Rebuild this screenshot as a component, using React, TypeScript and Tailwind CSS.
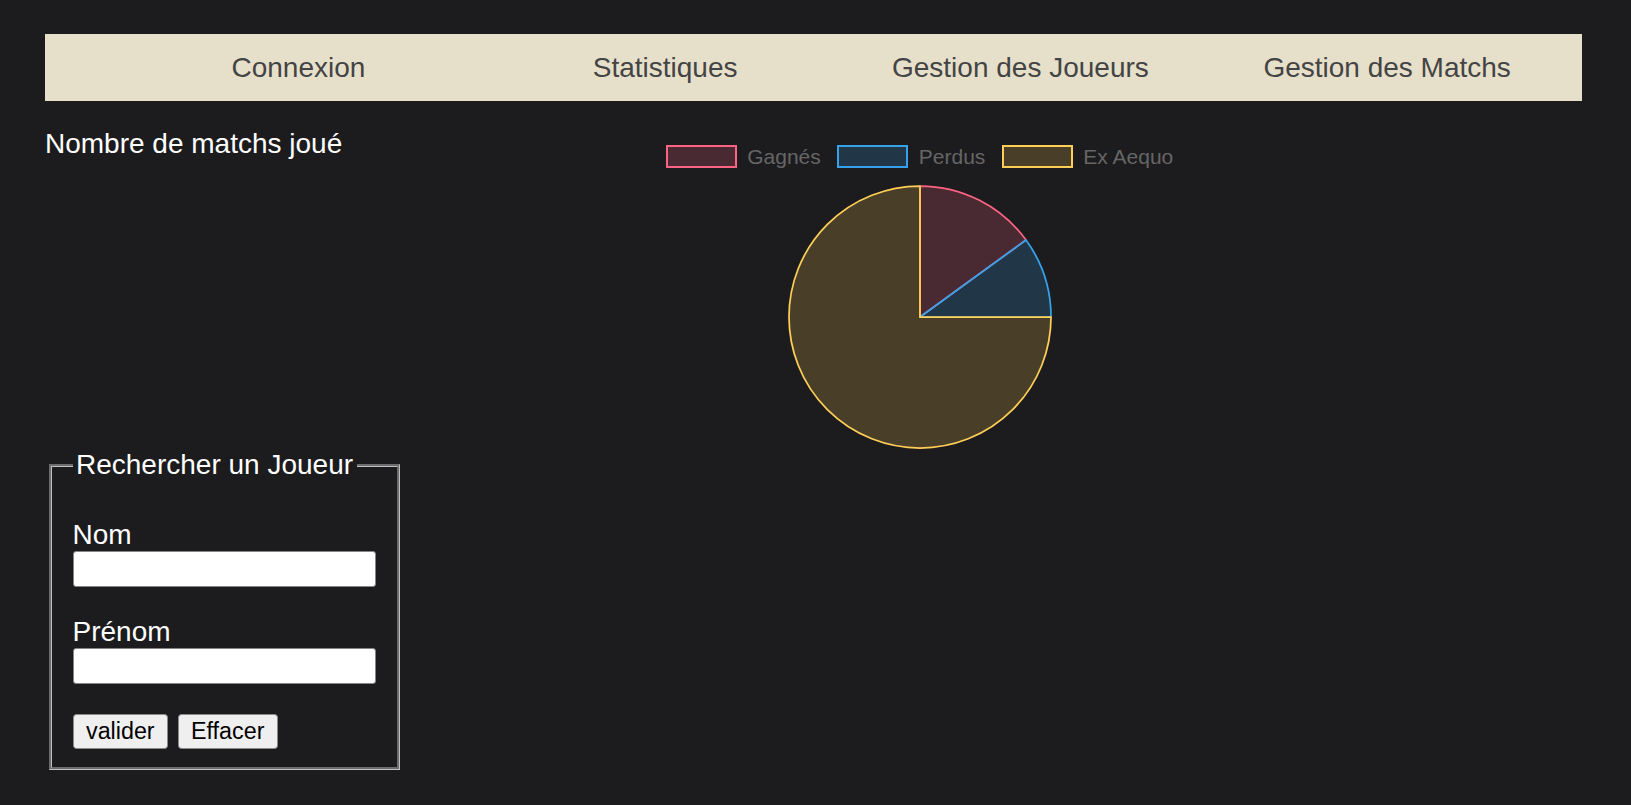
import React from "react";

const legendItems = [
  { label: "Gagnés", fill: "bg-[rgba(255,99,132,0.2)]", border: "border-[rgb(255,99,132)]" },
  { label: "Perdus", fill: "bg-[rgba(54,162,235,0.2)]", border: "border-[rgb(54,162,235)]" },
  { label: "Ex Aequo", fill: "bg-[rgba(255,206,86,0.2)]", border: "border-[rgb(255,206,86)]" },
];

function Pie() {
  return (
    <svg width="266" height="266" viewBox="0 0 266 266" className="block">
      <path
        d="M133 133 L133 2 A131 131 0 0 1 238.98 56 Z"
        fill="rgba(255,99,132,0.2)"
        stroke="rgb(255,99,132)"
        strokeWidth="1.75"
        strokeLinejoin="round"
      />
      <path
        d="M133 133 L238.98 56 A131 131 0 0 1 264 133 Z"
        fill="rgba(54,162,235,0.2)"
        stroke="rgb(54,162,235)"
        strokeWidth="1.75"
        strokeLinejoin="round"
      />
      <path
        d="M133 133 L264 133 A131 131 0 1 1 133 2 Z"
        fill="rgba(255,206,86,0.2)"
        stroke="rgb(255,206,86)"
        strokeWidth="1.75"
        strokeLinejoin="round"
      />
    </svg>
  );
}

export default function App() {
  return (
    <div className="min-h-screen bg-[#1c1c1e] pt-[34px] pl-[45px] pr-[49px] font-['Liberation_Sans',Arial,sans-serif] text-white">
      <nav className="flex h-[67px] items-center bg-[#e6e0cb] pl-[70px] text-[28px] leading-[32px] text-[#444444]">
        <div className="w-1/4 text-center">Connexion</div>
        <div className="w-1/4 text-center">Statistiques</div>
        <div className="w-1/4 pr-[23px] text-center">Gestion des Joueurs</div>
        <div className="w-1/4 pr-[23px] text-center">Gestion des Matchs</div>
      </nav>

      <div className="mt-[26.5px] flex h-[321.5px]">
        <div className="w-[500px] text-[28px] leading-[32px]">Nombre de matchs joué</div>
        <div className="flex w-[749px] flex-col items-center">
          <div className="mt-[17.5px] flex items-center gap-[16.5px]">
            {legendItems.map((it) => (
              <div key={it.label} className="flex items-center gap-[10.5px]">
                <div className={`h-[23px] w-[71px] border-2 ${it.fill} ${it.border}`} />
                <span className="text-[21px] leading-[23px] text-[#666666]">{it.label}</span>
              </div>
            ))}
          </div>
          <div className="mt-[15.5px]">
            <Pie />
          </div>
        </div>
      </div>

      <fieldset className="ml-[3.5px] w-[351.5px] border-[3.5px] border-[#c0c0c0] px-[21px] pb-[17.5px] pt-[9.8px] [border-style:groove]">
        <legend className="px-[3.5px] text-[28px] leading-[32px]">Rechercher un Joueur</legend>
        <div className="mt-[28.5px] text-[28px] leading-[32px]">Nom</div>
        <input
          type="text"
          className="block h-[36px] w-full rounded-[3px] border-[1.5px] border-[#858585] bg-white text-[23px] text-black outline-none"
        />
        <div className="mt-[29px] text-[28px] leading-[32px]">Prénom</div>
        <input
          type="text"
          className="block h-[36px] w-full rounded-[3px] border-[1.5px] border-[#858585] bg-white text-[23px] text-black outline-none"
        />
        <div className="mt-[29.5px] flex gap-[9.4px]">
          <button className="h-[35.6px] rounded-[3.5px] border-[1.75px] border-[#8a8a8a] bg-[#efefef] px-[12.5px] text-[23.3px] leading-none text-black">
            valider
          </button>
          <button className="h-[35.6px] rounded-[3.5px] border-[1.75px] border-[#8a8a8a] bg-[#efefef] px-[12.5px] text-[23.3px] leading-none text-black">
            Effacer
          </button>
        </div>
      </fieldset>
    </div>
  );
}
